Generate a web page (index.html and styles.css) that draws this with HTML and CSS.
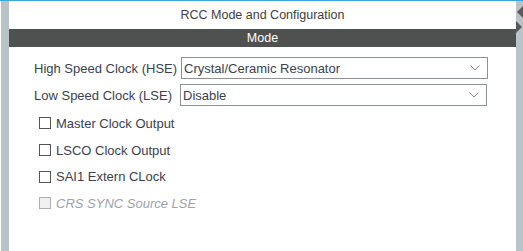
FILE: index.html
```html
<!DOCTYPE html>
<html lang="en">
<head>
    <meta charset="UTF-8">
    <title>RCC Mode and Configuration</title>
    <link rel="stylesheet" href="styles.css">
</head>
<body>
    <div class="frame">
        <div class="side side-left"></div>

        <div class="panel">
            <div class="panel-title">RCC Mode and Configuration</div>
            <div class="section-bar">Mode</div>

            <div class="form">
                <!-- Clock sources -->
                <div class="field">
                    <label class="field-label">High Speed Clock (HSE)</label>
                    <div class="select select-hse">
                        <span>Crystal/Ceramic Resonator</span>
                        <svg class="chevron" width="10" height="6" viewBox="0 0 10 6"><path d="M0.5 0.5 L5 5 L9.5 0.5" fill="none" stroke="#8c8c8c" stroke-width="1"/></svg>
                    </div>
                </div>
                <div class="field">
                    <label class="field-label">Low Speed Clock (LSE)</label>
                    <div class="select select-lse">
                        <span>Disable</span>
                        <svg class="chevron" width="10" height="6" viewBox="0 0 10 6"><path d="M0.5 0.5 L5 5 L9.5 0.5" fill="none" stroke="#8c8c8c" stroke-width="1"/></svg>
                    </div>
                </div>

                <!-- Options -->
                <div class="checks">
                    <div class="check"><span class="box"></span>Master Clock Output</div>
                    <div class="check"><span class="box"></span>LSCO Clock Output</div>
                    <div class="check"><span class="box"></span>SAI1 Extern CLock</div>
                    <div class="check disabled"><span class="box"></span>CRS SYNC Source LSE</div>
                </div>
            </div>
        </div>

        <div class="side side-right">
            <svg class="arrows" width="7" height="32" viewBox="0 0 7 32">
                <polygon points="7,2 1,8 7,14" fill="#5a5a5a"/>
                <polygon points="0,17 6,23 0,29" fill="#5a5a5a"/>
            </svg>
        </div>
    </div>
</body>
</html>
```

FILE: styles.css
```css
:root {
    --accent: #3aa8df;
    --side: #b9c4ca;
    --bar: #4f5150;
    --text: #3b3f4e;
    --border: #8d9296;
}

body {
    margin: 0;
    font-family: 'Liberation Sans', Arial, sans-serif;
    font-size: 13px;
    color: var(--text);
    background: #ffffff;
}

.frame {
    display: flex;
    height: 250px;
    border-top: 1px solid var(--accent);
}

.side {
    background: var(--side);
}

.side-left {
    width: 8px;
    margin-left: 1px;
}

.side-right {
    width: 7px;
}

.arrows {
    display: block;
    margin-top: 3px;
}

.panel {
    flex: 1;
    background: #ffffff;
}

.panel-title {
    height: 28px;
    line-height: 28px;
    text-align: center;
    color: #404040;
    font-size: 12.5px;
}

.section-bar {
    height: 18px;
    line-height: 18px;
    background: var(--bar);
    color: #ffffff;
    text-align: center;
    font-size: 12.5px;
}

.form {
    padding: 10px 0 0 25px;
}

.field {
    display: grid;
    grid-template-columns: 146px auto;
    align-items: center;
}

.field + .field {
    margin-top: 5px;
}

.select {
    box-sizing: border-box;
    display: flex;
    align-items: center;
    justify-content: space-between;
    width: 307px;
    height: 22px;
    border: 1px solid var(--border);
    padding: 0 7px 0 2px;
}

.select-hse {
    margin-left: 1px;
}

.checks {
    padding: 4px 0 0 5px;
}

.check {
    display: flex;
    align-items: center;
    height: 26.7px;
}

.box {
    width: 10px;
    height: 10px;
    border: 1px solid #555555;
    margin-right: 5px;
}

.check.disabled {
    color: #9ea2a8;
    font-style: italic;
}

.check.disabled .box {
    border-color: #b0b0b0;
    background: #f0f0f0;
}
```
